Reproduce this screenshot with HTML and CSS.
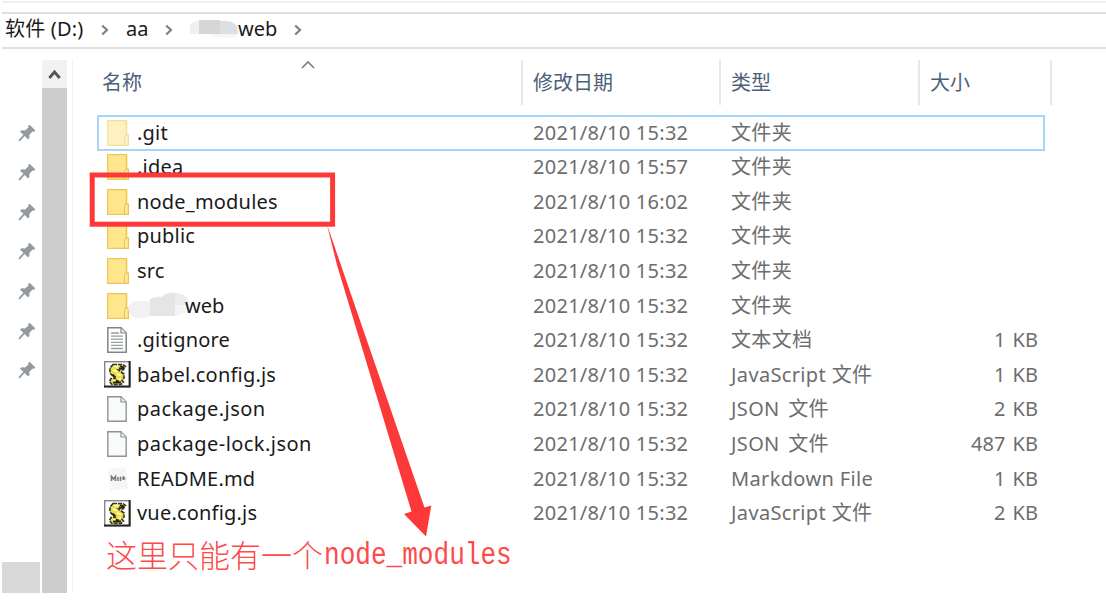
FILE: index.html
```html
<!DOCTYPE html>
<html lang="zh-CN">
<head>
    <meta charset="UTF-8">
    <title>web</title>
    <link rel="stylesheet" href="styles.css">
</head>
<body>

    <!-- icons -->
    <svg class="defs" width="0" height="0">
        <symbol id="pin" viewBox="0 0 18 18">
            <path d="M11.5 0.8 L17.3 6.3 L15.8 8 L14.6 7.4 L11.4 10.8 L11.4 14.2 L9.9 15.2 L6.6 12 L2.2 17 L0.6 17.2 L1 15.6 L5.4 10.8 L2 7.7 L3.4 6.2 L7 6.4 L10.5 3.4 L10 2.2 Z" fill="#939a9f"/>
        </symbol>
        <symbol id="folder" viewBox="0 0 22 26">
            <path d="M.7 .7 H19.5 V15 H21.3 V25.3 H.7 Z" fill="#ffe58c" stroke="#ebc754" stroke-width="1.2"/>
            <path d="M19.5 1 V15" stroke="#ebc754" stroke-width="1.4"/>
            <path d="M17.5 25 V17 L19 15.2 H21.3 V25.3 Z" fill="#ffe89a" stroke="#e8c04a" stroke-width="1"/>
        </symbol>
        <symbol id="file" viewBox="0 0 20 26">
            <path d="M.8 .8 H14 L19.2 6 V25.2 H.8 Z" fill="#f9fafa" stroke="#8c9397" stroke-width="1.4"/>
            <path d="M14 1 V6 H19" fill="#eceeef" stroke="#8c9397" stroke-width="1.2"/>
        </symbol>
        <symbol id="text" viewBox="0 0 20 26">
            <path d="M.8 .8 H14 L19.2 6 V25.2 H.8 Z" fill="#fff" stroke="#7f8588" stroke-width="1.5"/>
            <path d="M14 1 V6 H19" fill="#eceeef" stroke="#7f8588" stroke-width="1.2"/>
            <path d="M4 6 H12 M4 9.1 H16 M4 12.2 H16 M4 15.3 H16 M4 18.4 H16 M4 21.5 H16" stroke="#9a9fa1" stroke-width="1.3"/>
        </symbol>
        <symbol id="script" viewBox="0 0 27 27">
            <rect x=".7" y=".7" width="25" height="25" fill="#fff" stroke="#85858a" stroke-width="1.4"/>
            <path d="M25.6 0 V25.6 H0" fill="none" stroke="#222" stroke-width="2"/>
            <path d="M9 3.5 H19 L21.5 5.5 L19 9 H14.5 L20 13 V17 L18 19.5 L19.5 21 L17 23.5 H8 L5.5 20.5 L7 17.5 H11 L6 12 V7 Z" fill="#eee23a" stroke="#333" stroke-width="1.6" stroke-dasharray="4 1"/>
            <path d="M15 7.5 H20 M16 5 L20.5 6.5 M8.5 13.5 L11.5 16.5 M9 21.5 H17 M12 19.5 L15 20.5" fill="none" stroke="#222" stroke-width="1.8"/>
            <path d="M10 5.6 H14 M9 9 L13 10.5 M13 13 L17 14.5 M9 19.5 H11 M14.5 18 H17" stroke="#fff" stroke-width="1.5"/>
        </symbol>
        <symbol id="md" viewBox="0 0 22 26">
            <path d="M1 3 L19 1 L21 22 L3 25 Z" fill="#f6f6f6"/>
            <path d="M4.5 15 V10.5 L6.5 13 L8.5 10.5 V15 M11 15 V11 M13.5 10.5 V15 M16.5 10 V14 M15 12.5 H18.5" fill="none" stroke="#777" stroke-width="1.5"/>
        </symbol>
        <symbol id="chevron" viewBox="0 0 8 12">
            <path d="M1.2 1.5 L6 6 L1.2 10.5" fill="none" stroke="#808080" stroke-width="2.2"/>
        </symbol>
    </svg>

    <div class="window">
        <div class="toolbar"></div>
        <div class="address">
            <span class="crumb crumb-drive">软件 (D:)</span>
            <svg class="sep"><use href="#chevron"/></svg>
            <span class="crumb crumb-aa">aa</span>
            <svg class="sep"><use href="#chevron"/></svg>
            <span class="crumb crumb-web"><svg class="smudge" width="49" height="19" viewBox="0 0 49 19">
                <path d="M3 2 Q9 0 12 0 V14 H0 V5 Z" fill="#eeeff0"/>
                <path d="M9 0 H30 V14 H9 Z" fill="#d6d6d8"/>
                <path d="M30 1 Q42 0 47 6 L48 14 H30 Z" fill="#dedfe0"/>
                <path d="M20 14 H48 L46 17 Q34 19 20 16 Z" fill="#f6f6f7"/>
            </svg>web</span>
            <svg class="sep"><use href="#chevron"/></svg>
        </div>

        <div class="main">
            <div class="sidebar">
                <svg class="pin"><use href="#pin"/></svg>
                <svg class="pin"><use href="#pin"/></svg>
                <svg class="pin"><use href="#pin"/></svg>
                <svg class="pin"><use href="#pin"/></svg>
                <svg class="pin"><use href="#pin"/></svg>
                <svg class="pin"><use href="#pin"/></svg>
                <svg class="pin"><use href="#pin"/></svg>
                <div class="selected"></div>
            </div>
            <div class="scrollbar">
                <div class="scroll-up"><svg width="13" height="11" viewBox="0 0 13 11"><path d="M1.3 9 L6.5 3 L11.7 9" fill="none" stroke="#555" stroke-width="2.8"/></svg></div>
                <div class="thumb"></div>
            </div>

            <div class="files">
                <div class="head">
                    <div class="col name">名称<svg class="sort" width="14" height="9" viewBox="0 0 14 9"><path d="M1 8 L7 2 L13 8" fill="none" stroke="#808080" stroke-width="1.6"/></svg></div>
                    <div class="col date">修改日期</div>
                    <div class="col type">类型</div>
                    <div class="col size">大小</div>
                </div>
                <div class="row focused">
                    <div class="icon faded"><svg width="22" height="26"><use href="#folder"/></svg></div>
                    <div class="name">.git</div><div class="date">2021/8/10 15:32</div><div class="type">文件夹</div><div class="size"></div>
                </div>
                <div class="row">
                    <div class="icon"><svg width="22" height="26"><use href="#folder"/></svg></div>
                    <div class="name">.idea</div><div class="date">2021/8/10 15:57</div><div class="type">文件夹</div><div class="size"></div>
                </div>
                <div class="row">
                    <div class="icon"><svg width="22" height="26"><use href="#folder"/></svg></div>
                    <div class="name">node_modules</div><div class="date">2021/8/10 16:02</div><div class="type">文件夹</div><div class="size"></div>
                </div>
                <div class="row">
                    <div class="icon"><svg width="22" height="26"><use href="#folder"/></svg></div>
                    <div class="name">public</div><div class="date">2021/8/10 15:32</div><div class="type">文件夹</div><div class="size"></div>
                </div>
                <div class="row">
                    <div class="icon"><svg width="22" height="26"><use href="#folder"/></svg></div>
                    <div class="name">src</div><div class="date">2021/8/10 15:32</div><div class="type">文件夹</div><div class="size"></div>
                </div>
                <div class="row">
                    <div class="icon"><svg width="22" height="26"><use href="#folder"/></svg></div>
                    <div class="name masked"><svg class="smudge" width="61" height="27" viewBox="0 0 61 27">
                        <path d="M0 17 Q1 9 10 9 H24 V23 Q12 29 3 24 Z" fill="#f1f1f1"/>
                        <path d="M22 7 Q28 4 34 5 Q38 0 48 1 V24 H22 Z" fill="#e5e5e6"/>
                        <path d="M47 1 Q60 1 61 12 V13 H47 Z" fill="#ebecef"/>
                        <path d="M47 13 H61 Q58 23 47 24 Z" fill="#f3f5f7"/>
                    </svg>web</div><div class="date">2021/8/10 15:32</div><div class="type">文件夹</div><div class="size"></div>
                </div>
                <div class="row">
                    <div class="icon"><svg width="20" height="26"><use href="#text"/></svg></div>
                    <div class="name">.gitignore</div><div class="date">2021/8/10 15:32</div><div class="type">文本文档</div><div class="size">1 KB</div>
                </div>
                <div class="row">
                    <div class="icon wide"><svg width="27" height="27"><use href="#script"/></svg></div>
                    <div class="name">babel.config.js</div><div class="date">2021/8/10 15:32</div><div class="type">JavaScript 文件</div><div class="size">1 KB</div>
                </div>
                <div class="row json">
                    <div class="icon"><svg width="20" height="26"><use href="#file"/></svg></div>
                    <div class="name">package.json</div><div class="date">2021/8/10 15:32</div><div class="type">JSON 文件</div><div class="size">2 KB</div>
                </div>
                <div class="row json">
                    <div class="icon"><svg width="20" height="26"><use href="#file"/></svg></div>
                    <div class="name">package-lock.json</div><div class="date">2021/8/10 15:32</div><div class="type">JSON 文件</div><div class="size">487 KB</div>
                </div>
                <div class="row">
                    <div class="icon"><svg width="22" height="26"><use href="#md"/></svg></div>
                    <div class="name">README.md</div><div class="date">2021/8/10 15:32</div><div class="type">Markdown File</div><div class="size">1 KB</div>
                </div>
                <div class="row">
                    <div class="icon wide"><svg width="27" height="27"><use href="#script"/></svg></div>
                    <div class="name">vue.config.js</div><div class="date">2021/8/10 15:32</div><div class="type">JavaScript 文件</div><div class="size">2 KB</div>
                </div>
                <div class="note">这里只能有一个<span class="mono">node_modules</span></div>
            </div>
        </div>

        <!-- red box and arrow over the list -->
        <svg class="marks" width="1106" height="608">
            <rect x="92.2" y="175" width="240.4" height="49.2" fill="none" stroke="#fd3838" stroke-width="5"/>
            <path d="M327 225 L328.5 229 L424.5 507.5 L431.3 505.5 L426 536.5 L404 514 L411.5 511.5 L337 265 Z" fill="#fd3838"/>
        </svg>
    </div>

</body>
</html>
```

FILE: styles.css
```css
body {
    margin: 0;
    background: #fff;
    font-family: "Noto Sans", "Noto Sans CJK SC", sans-serif;
    font-size: 20px;
    color: #1a1a1a;
}
.defs {
    position: absolute;
}
.window {
    position: relative;
    width: 1106px;
    height: 608px;
    overflow: hidden;
}
.toolbar {
    box-sizing: border-box;
    height: 14px;
    margin-left: 2px;
    padding-top: 1px;
    border-bottom: 2px solid #e0e0e0;
}
.toolbar::before {
    content: "";
    display: block;
    height: 2px;
    background: #f0f0f0;
}
.address {
    box-sizing: border-box;
    display: flex;
    align-items: center;
    height: 35px;
    margin-left: 2px;
    padding: 0 0 4px 3px;
    border-bottom: 2px solid #e0e0e0;
}
.crumb {
    line-height: 30px;
    white-space: nowrap;
}
.crumb-drive {
    width: 96px;
    letter-spacing: 0.2px;
}
.crumb-aa {
    width: 39px;
    padding-left: 17px;
}
.crumb-web {
    display: flex;
    align-items: center;
    width: 104px;
    padding-left: 17px;
}
.crumb-web .smudge {
    margin: 2px -1px 0 0;
}
.sep {
    width: 8px;
    height: 12px;
    flex: none;
    margin-top: 3px;
}

.main {
    display: flex;
    height: 533px;
    margin: 11px 0 0 2px;
}
.sidebar {
    display: flex;
    flex-direction: column;
    align-items: flex-start;
    gap: 21.65px;
    width: 38px;
    padding-top: 63.5px;
    box-sizing: border-box;
}
.pin {
    flex: none;
    width: 18px;
    height: 18px;
    margin-left: 16px;
}
.selected {
    width: 38px;
    height: 31px;
    margin-top: auto;
    background: #d9d9d9;
}
.scrollbar {
    display: flex;
    flex-direction: column;
    width: 25px;
    margin-left: 2px;
    border-right: 1px solid #fff;
}
.scroll-up {
    display: flex;
    justify-content: center;
    align-items: center;
    height: 28px;
    background: #f1f1f1;
}
.thumb {
    flex: 1;
    background: #cdcdcd;
}
.files {
    width: 980px;
    margin-left: 4px;
    border-left: 1px solid #f3f3f3;
    padding-left: 24px;
}

.head {
    display: flex;
    height: 45px;
    color: #4c607a;
}
.col {
    box-sizing: border-box;
    border-right: 2px solid #e8e8e8;
    line-height: 46px;
    padding-left: 10px;
}
.head .name {
    display: flex;
    width: 426px;
    padding-left: 5px;
}
.head .date { width: 198px; }
.head .type { width: 199px; }
.head .size { width: 132px; }
.sort { margin-left: 159px; }

.row {
    box-sizing: border-box;
    display: flex;
    align-items: center;
    width: 948px;
    height: 34.65px;
    padding-left: 10px;
    line-height: 32px;
    white-space: nowrap;
}
.head + .row { margin-top: 10px; }
.row.focused {
    height: 36px;
    margin-bottom: -1.35px;
    border: 2px solid #a8d5f7;
    padding-left: 8px;
}
.icon {
    display: flex;
    width: 30px;
}
.icon.wide {
    margin-left: -3px;
    width: 33px;
}
.faded { opacity: 0.55; }
.row .name {
    width: 396px;
    letter-spacing: 0.2px;
}
.row .date {
    width: 198px;
    color: #6d6d6d;
    letter-spacing: 0.27px;
}
.row .type {
    width: 178px;
    color: #6d6d6d;
    letter-spacing: 0.35px;
}
.row .size {
    width: 129px;
    color: #6d6d6d;
    text-align: right;
    word-spacing: 2px;
}
.json .name { letter-spacing: 0.45px; }
.json .type { word-spacing: 3px; }
.row .masked {
    display: flex;
    align-items: center;
    letter-spacing: 0;
}
.masked .smudge {
    flex: none;
    margin: 0 -4px 0 -9px;
}

.note {
    display: flex;
    margin: 1px 0 0 9px;
    line-height: 44px;
    font-family: "Noto Sans CJK SC", sans-serif;
    font-size: 31px;
    font-weight: 300;
    color: #fd4a4a;
    white-space: nowrap;
}
.mono {
    margin: 2px 0 0 1px;
    font-family: "Liberation Mono", monospace;
    transform: scaleX(0.841);
    transform-origin: left;
}

.marks {
    position: absolute;
    left: 0;
    top: 0;
}
```
